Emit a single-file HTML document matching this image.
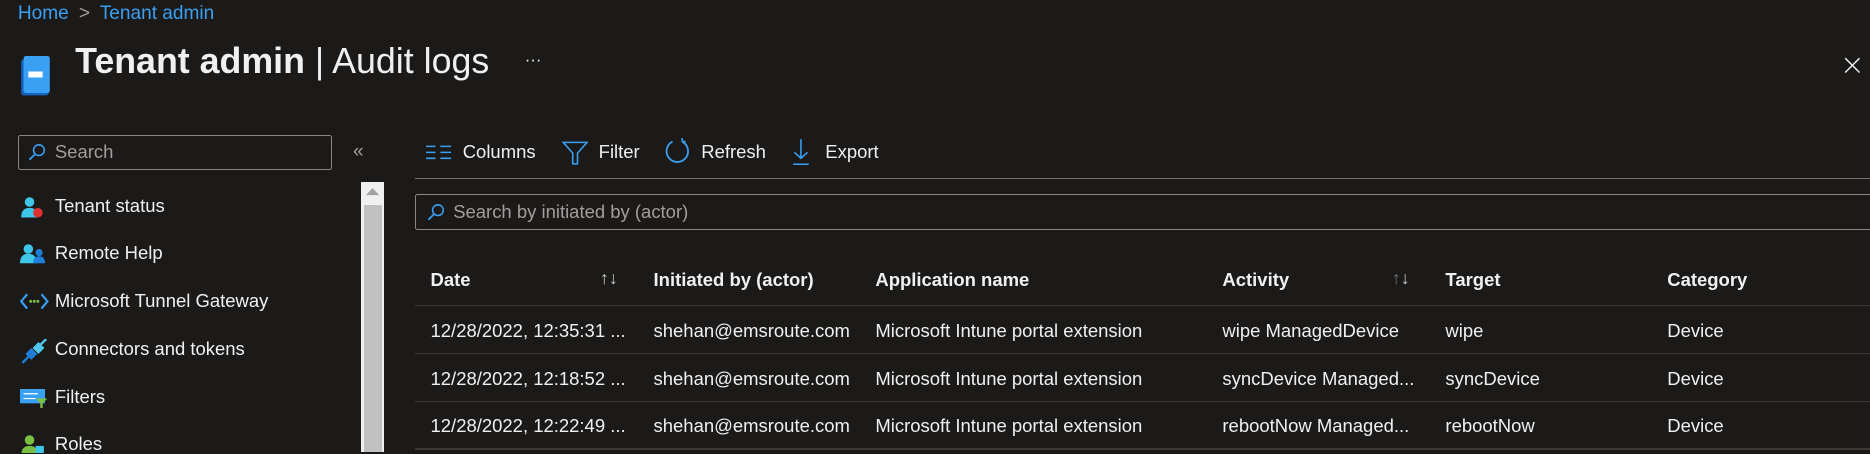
<!DOCTYPE html>
<html><head><meta charset="utf-8"><style>
html,body{margin:0;padding:0;background:#1b1a19;overflow:hidden;width:1870px;height:452px}
#w{position:absolute;left:0;top:0;width:1568px;height:379px;zoom:1.19260;font-family:"Liberation Sans",sans-serif;color:#f0f0f0;font-size:15.5px}
.a{position:absolute;white-space:nowrap;line-height:1}
.blue{color:#3aa0f3}
.g{color:#a19f9d}
.b{font-weight:bold}
.line{position:absolute;height:1px;background:#5a5958}
</style></head><body><div id="w">
<div class="a blue" style="left:15px;top:3px;font-size:16px">Home <span style="color:#a19f9d;margin:0 4px">&gt;</span> Tenant admin</div>
<svg class="a" style="left:17px;top:47px" width="26" height="34" viewBox="0 0 26 34"><rect x="1" y="3" width="23" height="30" rx="2" fill="#1565c0"/><rect x="3" y="0" width="22" height="31" rx="2" fill="#3aa0f3"/><rect x="7" y="13" width="12" height="5" fill="#fff"/></svg>
<div class="a" style="left:63px;top:37px;font-size:30px"><span class="b">Tenant admin</span> | Audit logs</div>
<div class="a" style="left:440px;top:44px;font-size:14px">···</div>
<svg class="a" style="left:1546px;top:48px" width="14" height="14"><path d="M1 1L13 13M13 1L1 13" stroke="#eee" stroke-width="1.2"/></svg>

<div class="a" style="left:15px;top:113px;width:262px;height:28px;border:1px solid #8a8886;border-radius:2px"></div>
<svg class="a" style="left:23px;top:120px" width="16" height="16"><circle cx="10" cy="6" r="4.5" fill="none" stroke="#3aa0f3" stroke-width="1.3"/><path d="M7 9L2 14" stroke="#3aa0f3" stroke-width="1.5"/></svg>
<div class="a g" style="left:46px;top:120px">Search</div>
<div class="a g" style="left:296px;top:119px;font-size:16px">«</div>

<div class="a" style="left:303px;top:153px;width:19px;height:226px;background:#f0f0f0"></div>
<div class="a" style="left:305px;top:172px;width:15px;height:207px;background:#c1c1c1"></div>
<svg class="a" style="left:307px;top:158px" width="11" height="7"><path d="M0 6L5.5 0L11 6Z" fill="#a3a3a3"/></svg>

<svg class="a" style="left:17px;top:164px" width="22" height="20"><circle cx="8" cy="5" r="4" fill="#3ec6e8"/><path d="M1 18c0-6 3-8 7-8s7 2 7 8z" fill="#3ec6e8"/><circle cx="15" cy="14" r="4" fill="#e03030"/></svg>
<div class="a" style="left:46px;top:165px">Tenant status</div>
<svg class="a" style="left:17px;top:204px" width="24" height="20"><circle cx="7" cy="5" r="4" fill="#3ec6e8"/><path d="M0 17c0-6 3-8 7-8s7 2 7 8z" fill="#3ec6e8"/><circle cx="16" cy="8" r="3" fill="#1e7fd8"/><path d="M11 17c0-4 2-6 5-6s5 2 5 6z" fill="#1e7fd8"/></svg>
<div class="a" style="left:46px;top:205px">Remote Help</div>
<svg class="a" style="left:17px;top:246px" width="24" height="14"><path d="M6 1L1 7L6 13M18 1L23 7L18 13" stroke="#3aa0f3" stroke-width="1.8" fill="none"/><circle cx="9" cy="7" r="1.2" fill="#7ac143"/><circle cx="12" cy="7" r="1.2" fill="#7ac143"/><circle cx="15" cy="7" r="1.2" fill="#7ac143"/></svg>
<div class="a" style="left:46px;top:245px">Microsoft Tunnel Gateway</div>
<svg class="a" style="left:17px;top:284px" width="24" height="22"><path d="M2 20L8 14" stroke="#1e7fd8" stroke-width="2"/><rect x="6" y="9" width="7" height="7" transform="rotate(-45 9.5 12.5)" fill="#1e7fd8"/><rect x="12" y="4" width="7" height="7" transform="rotate(-45 15.5 7.5)" fill="#50c8ee"/><path d="M17 5L22 0" stroke="#50c8ee" stroke-width="2"/></svg>
<div class="a" style="left:46px;top:285px">Connectors and tokens</div>
<svg class="a" style="left:17px;top:326px" width="24" height="16"><rect x="0" y="0" width="21" height="12" fill="#3aa0f3"/><path d="M3 4H15M3 8H13" stroke="#fff" stroke-width="1"/><path d="M13 8H23L19 12V16H17V12Z" fill="#7ac143"/></svg>
<div class="a" style="left:46px;top:325px">Filters</div>
<svg class="a" style="left:17px;top:364px" width="22" height="16"><circle cx="8" cy="5" r="4" fill="#7ac143"/><path d="M1 18c0-6 3-8 7-8s7 2 7 8z" fill="#7ac143"/><rect x="13" y="10" width="7" height="7" fill="#3ec6e8"/></svg>
<div class="a" style="left:46px;top:365px">Roles</div>

<svg class="a" style="left:357px;top:121px" width="22" height="14"><path d="M0 2H8M12 2H21M0 7H8M12 7H21M0 12H8M12 12H21" stroke="#3aa0f3" stroke-width="1.3"/></svg>
<div class="a" style="left:388px;top:120px">Columns</div>
<svg class="a" style="left:471px;top:117px" width="22" height="22"><path d="M1 2H21L13 11V20H9V11Z" fill="none" stroke="#3aa0f3" stroke-width="1.3"/></svg>
<div class="a" style="left:502px;top:120px">Filter</div>
<svg class="a" style="left:556px;top:116px" width="24" height="24"><path d="M8 3A9 9 0 1 0 16 3" fill="none" stroke="#3aa0f3" stroke-width="1.5"/><path d="M16 3V0M16 3H19" stroke="#3aa0f3" stroke-width="1.3"/></svg>
<div class="a" style="left:588px;top:120px">Refresh</div>
<svg class="a" style="left:664px;top:116px" width="16" height="24"><path d="M7.5 1V17M2 12L7.5 17L13 12M1 22H14" fill="none" stroke="#3aa0f3" stroke-width="1.3"/></svg>
<div class="a" style="left:692px;top:120px">Export</div>

<div class="line" style="left:348px;top:149px;width:1220px;background:#6e6d6c"></div>
<div class="a" style="left:348px;top:163px;width:1230px;height:28px;border:1px solid #8a8886;border-radius:2px"></div>
<svg class="a" style="left:357px;top:170px" width="16" height="16"><circle cx="10" cy="6" r="4.5" fill="none" stroke="#3aa0f3" stroke-width="1.3"/><path d="M7 9L2 14" stroke="#3aa0f3" stroke-width="1.5"/></svg>
<div class="a g" style="left:380px;top:170px">Search by initiated by (actor)</div>

<div class="a b" style="left:361px;top:227px">Date</div>
<div class="a" style="left:503px;top:226px;font-size:15px;color:#ccc">↑↓</div>
<div class="a b" style="left:548px;top:227px">Initiated by (actor)</div>
<div class="a b" style="left:734px;top:227px">Application name</div>
<div class="a b" style="left:1025px;top:227px">Activity</div>
<div class="a" style="left:1167px;top:226px;font-size:15px;color:#777">↑<span style="color:#ccc">↓</span></div>
<div class="a b" style="left:1212px;top:227px">Target</div>
<div class="a b" style="left:1398px;top:227px">Category</div>
<div class="line" style="left:348px;top:256px;width:1220px;background:#3b3a39"></div>

<div class="a" style="left:361px;top:270px">12/28/2022, 12:35:31 ...</div>
<div class="a" style="left:548px;top:270px">shehan@emsroute.com</div>
<div class="a" style="left:734px;top:270px">Microsoft Intune portal extension</div>
<div class="a" style="left:1025px;top:270px">wipe ManagedDevice</div>
<div class="a" style="left:1212px;top:270px">wipe</div>
<div class="a" style="left:1398px;top:270px">Device</div>
<div class="line" style="left:348px;top:296px;width:1220px;background:#3b3a39"></div>

<div class="a" style="left:361px;top:310px">12/28/2022, 12:18:52 ...</div>
<div class="a" style="left:548px;top:310px">shehan@emsroute.com</div>
<div class="a" style="left:734px;top:310px">Microsoft Intune portal extension</div>
<div class="a" style="left:1025px;top:310px">syncDevice Managed...</div>
<div class="a" style="left:1212px;top:310px">syncDevice</div>
<div class="a" style="left:1398px;top:310px">Device</div>
<div class="line" style="left:348px;top:336px;width:1220px;background:#3b3a39"></div>

<div class="a" style="left:361px;top:350px">12/28/2022, 12:22:49 ...</div>
<div class="a" style="left:548px;top:350px">shehan@emsroute.com</div>
<div class="a" style="left:734px;top:350px">Microsoft Intune portal extension</div>
<div class="a" style="left:1025px;top:350px">rebootNow Managed...</div>
<div class="a" style="left:1212px;top:350px">rebootNow</div>
<div class="a" style="left:1398px;top:350px">Device</div>
<div class="line" style="left:348px;top:376px;width:1220px;background:#3b3a39"></div>
</div></body></html>
